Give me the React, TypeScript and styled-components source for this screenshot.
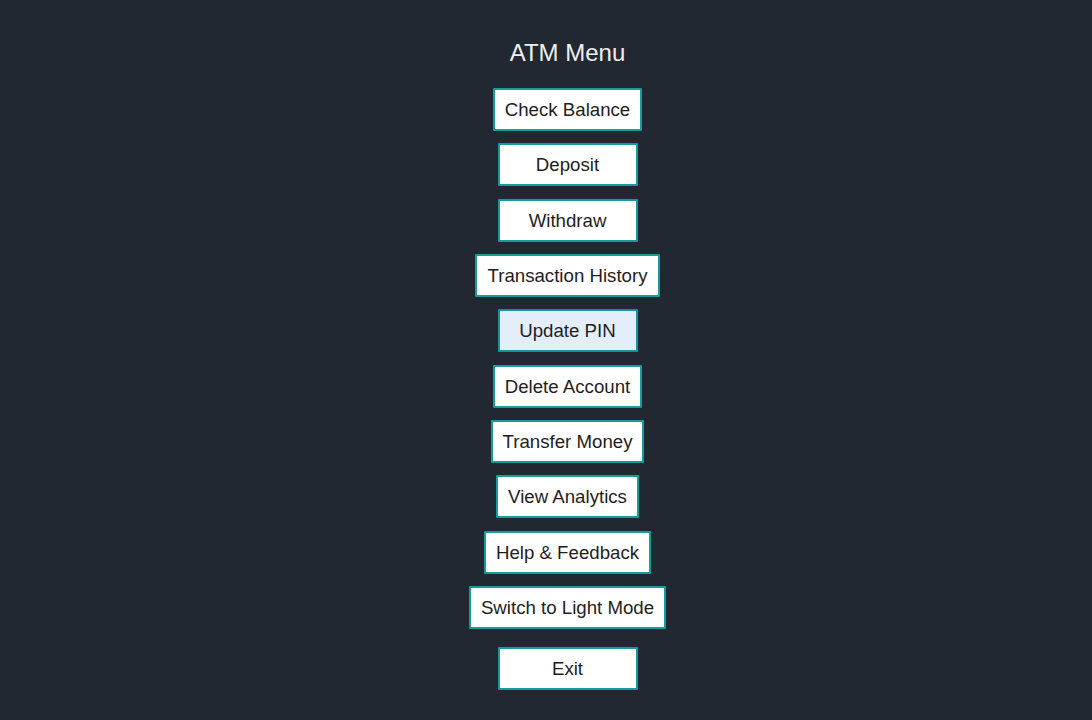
import React from "react";
import styled, { createGlobalStyle } from "styled-components";

const GlobalStyle = createGlobalStyle`
  html, body { margin: 0; padding: 0; background: #222831; }
  body { font-family: "Liberation Sans", Arial, sans-serif; }
  #root { min-height: 720px; }
`;

const Screen = styled.div`
  min-height: 720px;
  display: flex;
  flex-direction: column;
  align-items: center;
  padding-top: 39px;
  padding-left: 43px;
  box-sizing: border-box;
`;

const Title = styled.h1`
  margin: 0 0 21px;
  font-size: 24px;
  line-height: 28px;
  font-weight: 400;
  color: #eeeeee;
  font-family: "Liberation Sans", Arial, sans-serif;
`;

const Menu = styled.div`
  display: flex;
  flex-direction: column;
  align-items: center;
`;

const MenuButton = styled.button<{ $active?: boolean; $spaced?: boolean }>`
  box-sizing: border-box;
  height: 43px;
  min-width: 140px;
  padding: 2px 10px 0;
  margin-bottom: 12.33px;
  margin-top: ${(p) => (p.$spaced ? "6px" : "0")};
  border: 2px solid ${(p) => (p.$active ? "#1b8fa8" : "#169c9c")};
  border-radius: 1px;
  background: ${(p) => (p.$active ? "#e3eefa" : "#ffffff")};
  color: #1e1e1e;
  font-family: "Liberation Sans", Arial, sans-serif;
  font-size: 18.67px;
  line-height: 1;
  cursor: pointer;
  white-space: nowrap;
`;

const items = [
  "Check Balance",
  "Deposit",
  "Withdraw",
  "Transaction History",
  "Update PIN",
  "Delete Account",
  "Transfer Money",
  "View Analytics",
  "Help & Feedback",
  "Switch to Light Mode",
];

export default function App() {
  return (
    <>
      <GlobalStyle />
      <Screen>
        <Title>ATM Menu</Title>
        <Menu>
          {items.map((label) => (
            <MenuButton key={label} $active={label === "Update PIN"}>
              {label}
            </MenuButton>
          ))}
          <MenuButton $spaced>Exit</MenuButton>
        </Menu>
      </Screen>
    </>
  );
}
